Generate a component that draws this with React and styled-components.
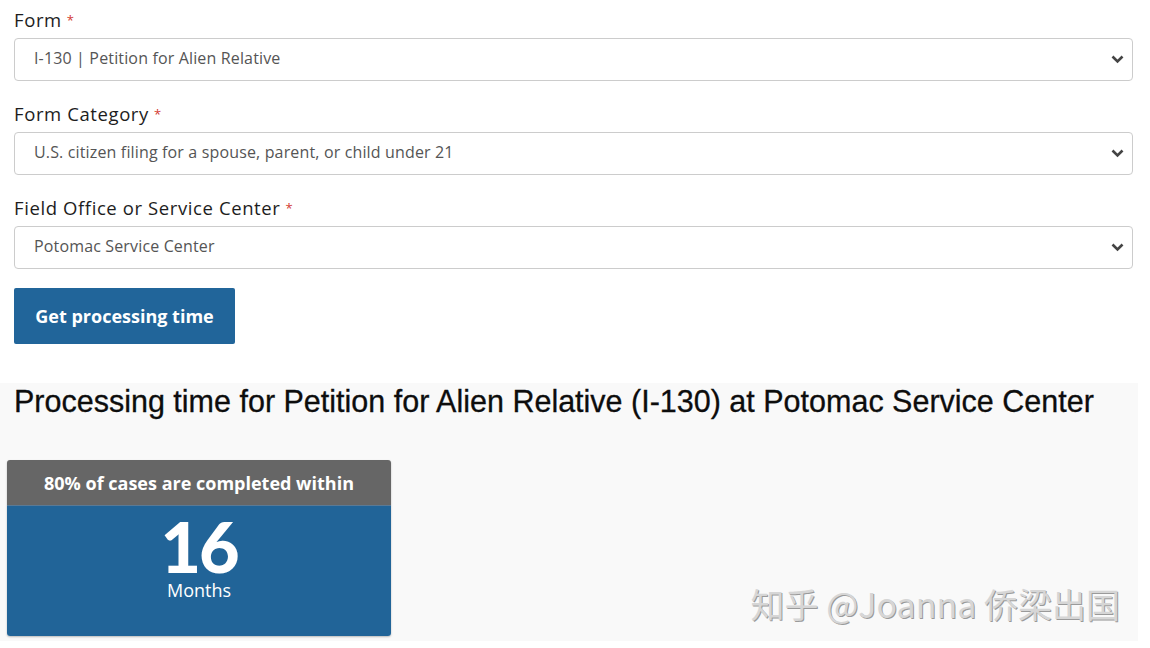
import React from 'react';
import styled, { createGlobalStyle } from 'styled-components';

const GlobalStyle = createGlobalStyle`
  body {
    margin: 0;
    background: #ffffff;
    font-family: "Open Sans", "Liberation Sans", sans-serif;
  }
`;

const fields = [
  { label: 'Form', value: 'I-130 | Petition for Alien Relative' },
  { label: 'Form Category', value: 'U.S. citizen filing for a spouse, parent, or child under 21' },
  { label: 'Field Office or Service Center', value: 'Potomac Service Center' },
];

function Chevron() {
  return (
    <svg width="13" height="9" viewBox="0 0 13 9">
      <path d="M1.5 1.5 L6.5 6.5 L11.5 1.5" fill="none" stroke="#444" strokeWidth="2.6" />
    </svg>
  );
}

export default function App() {
  return (
    <>
      <GlobalStyle />
      <Page>
        <FormArea>
          {fields.map((f) => (
            <Field key={f.label}>
              <Label>
                {f.label}
                <Required>*</Required>
              </Label>
              <SelectBox>
                <SelectText>{f.value}</SelectText>
                <Chevron />
              </SelectBox>
            </Field>
          ))}
          <SubmitButton>Get processing time</SubmitButton>
        </FormArea>
        <ResultPanel>
          <ResultTitle>
            Processing time for Petition for Alien Relative (I-130) at Potomac Service Center
          </ResultTitle>
          <PanelBottom>
            <TimeCard>
              <CardHeader>80% of cases are completed within</CardHeader>
              <CardBody>
                <BigNumber>16</BigNumber>
                <Unit>Months</Unit>
              </CardBody>
            </TimeCard>
            <Watermark>知乎 @Joanna 侨梁出国</Watermark>
          </PanelBottom>
        </ResultPanel>
      </Page>
    </>
  );
}

const Page = styled.div`
  width: 1150px;
  height: 648px;
  overflow: hidden;
`;

const FormArea = styled.div`
  padding: 9px 17px 0 14px;
  display: flex;
  flex-direction: column;
`;

const Field = styled.div`
  display: flex;
  flex-direction: column;
  margin-bottom: 22px;
  &:nth-child(3) {
    margin-bottom: 19px;
  }
`;

const Label = styled.div`
  font-size: 18.5px;
  line-height: 22px;
  letter-spacing: 0.6px;
  color: #1d1d1d;
  margin-bottom: 7px;
`;

const Required = styled.span`
  color: #d33a32;
  font-size: 13px;
  margin-left: 5px;
  vertical-align: top;
`;

const SelectBox = styled.div`
  height: 43px;
  box-sizing: border-box;
  border: 1px solid #cccccc;
  border-radius: 4px;
  display: flex;
  align-items: center;
  justify-content: space-between;
  padding: 0 8px 0 19px;
  background: #fff;
`;

const SelectText = styled.span`
  font-size: 16px;
  line-height: 18px;
  letter-spacing: 0.15px;
  margin-top: -3px;
  color: #555555;
`;

const SubmitButton = styled.button`
  width: 221px;
  height: 56px;
  border: none;
  border-radius: 2px;
  background: #21659a;
  color: #ffffff;
  font-family: "Open Sans", "Liberation Sans", sans-serif;
  font-weight: 700;
  font-size: 18px;
  cursor: pointer;
`;

const ResultPanel = styled.div`
  margin-top: 39px;
  width: 1138px;
  height: 258px;
  background: #f9f9f9;
  display: flex;
  flex-direction: column;
`;

const ResultTitle = styled.h2`
  margin: 1px 0 0 14px;
  font-family: "Liberation Sans", Arial, sans-serif;
  font-weight: 400;
  font-size: 30.5px;
  line-height: 34px;
  color: #0d0d0d;
  -webkit-text-stroke: 0.3px #0d0d0d;
`;

const PanelBottom = styled.div`
  display: flex;
  align-items: flex-end;
  justify-content: space-between;
  padding: 0 18px 5px 7px;
  margin-top: 42px;
`;

const TimeCard = styled.div`
  width: 384px;
  border-radius: 3px;
  overflow: hidden;
  box-shadow: 0 1px 2px rgba(0, 0, 0, 0.25);
`;

const CardHeader = styled.div`
  height: 46px;
  background: #666666;
  color: #ffffff;
  font-weight: 700;
  font-size: 18px;
  display: flex;
  align-items: center;
  justify-content: center;
  border-bottom: 1px solid #5a7a96;
  box-sizing: border-box;
`;

const CardBody = styled.div`
  height: 130px;
  background: #216498;
  color: #ffffff;
  display: flex;
  flex-direction: column;
  align-items: center;
  padding-top: 12px;
  box-sizing: border-box;
`;

const BigNumber = styled.div`
  font-family: Lato, "Liberation Sans", sans-serif;
  font-weight: 900;
  font-size: 70px;
  line-height: 56px;
  letter-spacing: -2px;
`;

const Unit = styled.div`
  font-size: 18px;
  line-height: 20px;
  margin-top: 6px;
`;

const Watermark = styled.div`
  font-family: "Noto Sans CJK SC", "Liberation Sans", sans-serif;
  font-size: 34px;
  color: #d6d6d6;
  text-shadow: 1px 1px 0 #9a9a9a;
  margin-bottom: 8px;
`;
